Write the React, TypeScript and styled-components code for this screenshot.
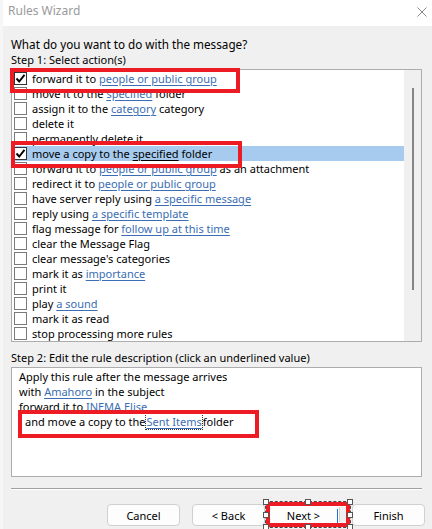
import React from "react";
import styled, { createGlobalStyle } from "styled-components";

const GlobalStyle = createGlobalStyle`
  html, body {
    margin: 0;
    padding: 0;
    background: #f0f0f0;
  }
  body {
    font-family: "Segoe UI", "Noto Sans", sans-serif;
    font-size: 11px;
    color: #000;
  }
`;

const RED = "#ed1c24";
const LINK = "#3a6db3";

type Part = string | { link: string; plain?: boolean };

const actions: { parts: Part[]; checked?: boolean; selected?: boolean; mark?: number }[] = [
  { parts: ["forward it to ", { link: "people or public group" }], checked: true, mark: 230 },
  { parts: ["move it to the ", { link: "specified" }, " folder"] },
  { parts: ["assign it to the ", { link: "category" }, " category"] },
  { parts: ["delete it"] },
  { parts: ["permanently delete it"] },
  {
    parts: ["move a copy to the ", { link: "specified", plain: true }, " folder"],
    checked: true,
    selected: true,
    mark: 231,
  },
  { parts: ["forward it to ", { link: "people or public group" }, " as an attachment"] },
  { parts: ["redirect it to ", { link: "people or public group" }] },
  { parts: ["have server reply using ", { link: "a specific message" }] },
  { parts: ["reply using ", { link: "a specific template" }] },
  { parts: ["flag message for ", { link: "follow up at this time" }] },
  { parts: ["clear the Message Flag"] },
  { parts: ["clear message's categories"] },
  { parts: ["mark it as ", { link: "importance" }] },
  { parts: ["print it"] },
  { parts: ["play ", { link: "a sound" }] },
  { parts: ["mark it as read"] },
  { parts: ["stop processing more rules"] },
];

const Window = styled.div`
  width: 432px;
  height: 529px;
  background: #f0f0f0;
  display: flex;
  flex-direction: column;
  overflow: hidden;
  border-left: 3px solid #f6f6f6;
  box-sizing: border-box;
`;

const TitleBar = styled.div`
  height: 26px;
  flex: none;
  background: #fff;
  display: flex;
  align-items: flex-start;
  justify-content: space-between;
  padding: 4px 5px 0 5px;
  box-sizing: border-box;
`;

const Title = styled.span`
  color: #9a9a9a;
  font-size: 12px;
  line-height: 14px;
`;

const CloseWrap = styled.span`
  padding-top: 1px;
`;

const Body = styled.div`
  flex: 1;
  display: flex;
  flex-direction: column;
  padding: 10px 10px 0 8px;
`;

const Label = styled.div<{ $size?: number }>`
  height: 16px;
  line-height: 16px;
  white-space: nowrap;
  font-size: ${(p) => p.$size ?? 11}px;
`;

const ListBox = styled.div`
  margin-top: 1px;
  height: 273px;
  border: 1px solid #adadad;
  background: #fff;
  box-sizing: border-box;
  display: flex;
`;

const Rows = styled.div`
  flex: 1;
  padding-top: 1px;
  display: flex;
  flex-direction: column;
`;

const Row = styled.div<{ $selected?: boolean }>`
  position: relative;
  height: 15px;
  display: flex;
  align-items: center;
  gap: 5px;
  margin-left: ${(p) => (p.$selected ? "1px" : "0")};
  padding-left: ${(p) => (p.$selected ? "1px" : "2px")};
  background: ${(p) => (p.$selected ? "#a6cbef" : "transparent")};
  white-space: nowrap;
`;

const Box = styled.span<{ $checked?: boolean }>`
  width: 13px;
  height: 13px;
  flex: none;
  box-sizing: border-box;
  border: 1px solid ${(p) => (p.$checked ? "#333" : "#7a7a7a")};
  background: #fff;
  display: flex;
  align-items: center;
  justify-content: center;
`;

const Text = styled.span`
  line-height: 15px;
`;

const Link = styled.span<{ $plain?: boolean }>`
  color: ${(p) => (p.$plain ? "#000" : LINK)};
  text-decoration: underline;
  text-underline-offset: 2px;
`;

const Mark = styled.div<{ $w: number; $top: number; $h: number; $left?: number }>`
  position: absolute;
  left: ${(p) => p.$left ?? -2}px;
  top: ${(p) => p.$top}px;
  width: ${(p) => p.$w}px;
  height: ${(p) => p.$h}px;
  border: 4px solid ${RED};
  box-sizing: border-box;
  z-index: 2;
  pointer-events: none;
`;

const Scroll = styled.div`
  width: 17px;
  flex: none;
  background: #f0f0f0;
  display: flex;
  justify-content: center;
  padding-top: 18px;
  box-sizing: border-box;
`;

const Thumb = styled.div`
  width: 2px;
  height: 202px;
  background: #858585;
  margin-left: 1px;
`;

const StepTwo = styled(Label)`
  margin-top: 8px;
`;

const Description = styled.div`
  margin-top: 1px;
  height: 110px;
  border: 1px solid #adadad;
  background: #fff;
  box-sizing: border-box;
  padding: 1px 0 0 7px;
`;

const DescLine = styled.div<{ $indent?: number }>`
  position: relative;
  height: 15px;
  line-height: 15px;
  white-space: nowrap;
  padding-left: ${(p) => p.$indent || 0}px;
`;

const Focused = styled.span`
  color: ${LINK};
  text-decoration: underline;
  text-underline-offset: 2px;
  outline: 1px dotted #333;
  margin: 0 1px;
`;

const Separator = styled.div`
  margin-top: 11px;
  height: 1px;
  background: #a0a0a0;
  border-bottom: 1px solid #fff;
`;

const Buttons = styled.div`
  margin-top: 14px;
  display: flex;
  justify-content: flex-end;
  margin-right: -3px;
`;

const Button = styled.div<{ $gap?: number }>`
  position: relative;
  width: 73px;
  height: 22px;
  box-sizing: border-box;
  border: 1px solid #d0d0d0;
  border-radius: 4px;
  background: #fdfdfd;
  display: flex;
  align-items: center;
  justify-content: center;
  font-size: 11px;
  margin-left: ${(p) => p.$gap ?? 12}px;
`;

const FocusLine = styled.span`
  position: absolute;
  right: 1px;
  top: 4px;
  width: 1px;
  height: 14px;
  background: #1a73d9;
`;

const Selection = styled.div`
  position: absolute;
  left: -2px;
  top: -3px;
  width: 84px;
  height: 25px;
  border: 4px solid ${RED};
  box-sizing: border-box;
  outline: 1px dashed #444;
  &::after {
    content: "";
    position: absolute;
    inset: 0;
    border-top: 1px dashed #fff;
    border-bottom: 1px dashed #fff;
  }
`;

const Handle = styled.span<{ $x: string; $y: string }>`
  position: absolute;
  width: 4px;
  height: 4px;
  background: #fff;
  border: 1px solid #555;
  left: ${(p) => p.$x};
  top: ${(p) => p.$y};
  transform: translate(-50%, -50%);
  z-index: 3;
`;

// positions on the outer edge of the red selection box (border-box 84x25, border 4)
const handles: [string, string][] = [
  ["-4px", "-4px"],
  ["38px", "-4px"],
  ["80px", "-4px"],
  ["-4px", "8.5px"],
  ["80px", "8.5px"],
  ["-4px", "21px"],
  ["38px", "21px"],
  ["80px", "21px"],
];

const Check = () => (
  <svg width="11" height="11" viewBox="0 0 11 11">
    <path d="M1.5 5.5 L4.2 8.5 L9.5 1.8" fill="none" stroke="#000" strokeWidth="1.9" />
  </svg>
);

const Close = () => (
  <svg width="10" height="10" viewBox="0 0 10 10">
    <path d="M0.5 0.5 L9.5 9.5 M9.5 0.5 L0.5 9.5" stroke="#888" strokeWidth="1" />
  </svg>
);

export default function App() {
  return (
    <>
      <GlobalStyle />
      <Window>
        <TitleBar>
          <Title>Rules Wizard</Title>
          <CloseWrap>
            <Close />
          </CloseWrap>
        </TitleBar>
        <Body>
          <Label $size={11.7}>What do you want to do with the message?</Label>
          <Label>Step 1: Select action(s)</Label>
          <ListBox>
            <Rows>
              {actions.map((a, i) => (
                <Row key={i} $selected={a.selected}>
                  <Box $checked={a.checked}>{a.checked && <Check />}</Box>
                  <Text>
                    {a.parts.map((p, j) =>
                      typeof p === "string" ? (
                        <React.Fragment key={j}>{p}</React.Fragment>
                      ) : (
                        <Link key={j} $plain={p.plain}>
                          {p.link}
                        </Link>
                      )
                    )}
                  </Text>
                  {a.mark && (
                    <Mark
                      $w={a.mark}
                      $top={a.selected ? -5 : -3}
                      $h={a.selected ? 27 : 25}
                    />
                  )}
                </Row>
              ))}
            </Rows>
            <Scroll>
              <Thumb />
            </Scroll>
          </ListBox>
          <StepTwo>Step 2: Edit the rule description (click an underlined value)</StepTwo>
          <Description>
            <DescLine>Apply this rule after the message arrives</DescLine>
            <DescLine>
              with <Link>Amahoro</Link> in the subject
            </DescLine>
            <DescLine>
              forward it to <Link>INEMA Elise</Link>
            </DescLine>
            <DescLine $indent={6}>
              and move a copy to the<Focused>Sent Items</Focused>folder
              <Mark $w={241} $top={-4} $h={28} $left={-1} />
            </DescLine>
          </Description>
          <Separator />
          <Buttons>
            <Button>Cancel</Button>
            <Button>&lt; Back</Button>
            <Button $gap={2}>
              Next &gt;
              <FocusLine />
              <Selection>
                {handles.map(([x, y], i) => (
                  <Handle key={i} $x={x} $y={y} />
                ))}
              </Selection>
            </Button>
            <Button>Finish</Button>
          </Buttons>
        </Body>
      </Window>
    </>
  );
}
